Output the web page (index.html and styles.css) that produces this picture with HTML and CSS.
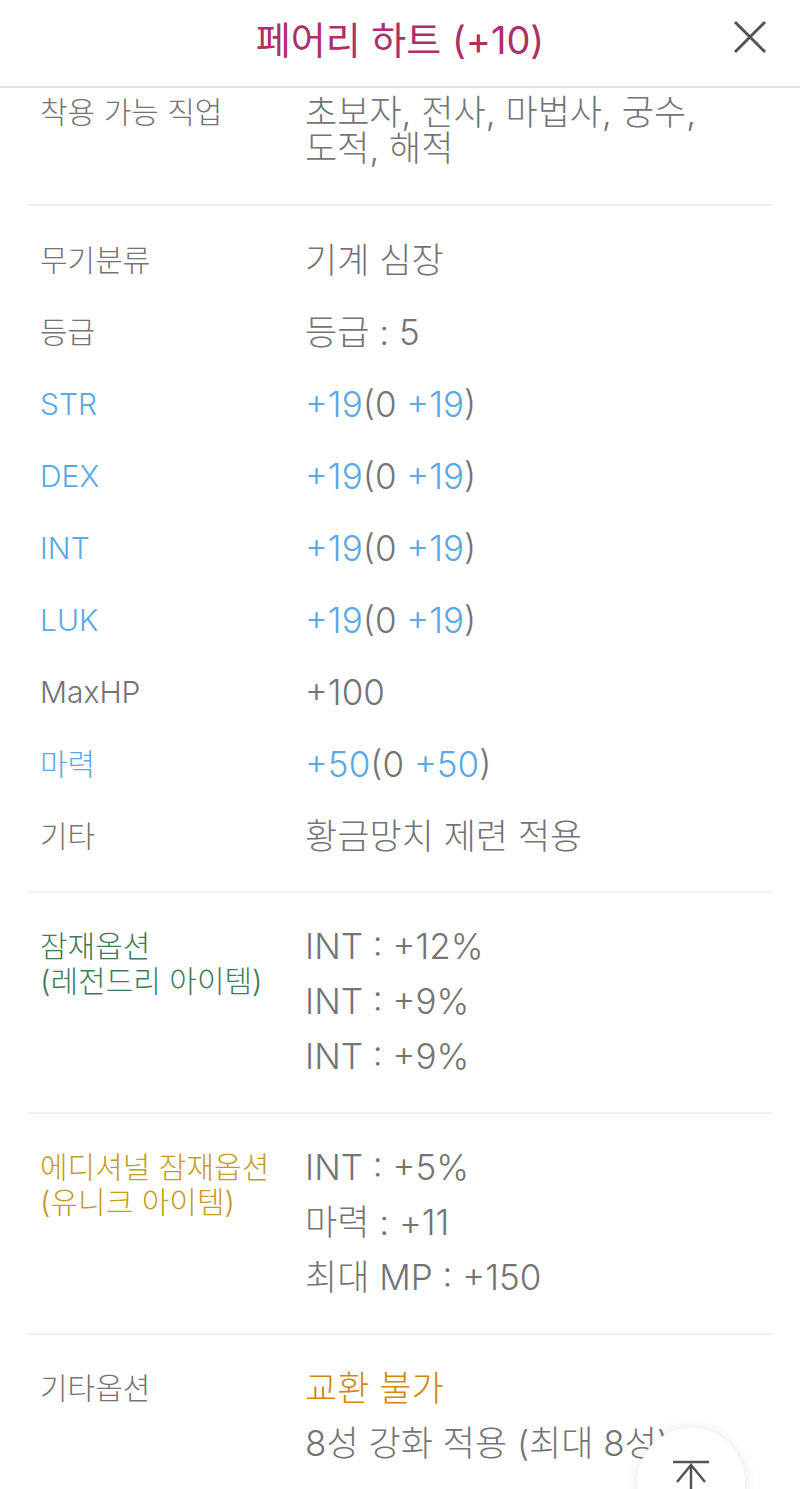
FILE: index.html
```html
<!DOCTYPE html>
<html lang="ko">
<head>
    <meta charset="UTF-8">
    <meta name="viewport" content="width=device-width, initial-scale=1.0">
    <title>페어리 하트 (+10)</title>
    <link rel="stylesheet" href="styles.css">
</head>
<body>
    <header class="header">
        <span></span>
        <h1 class="title">페어리 하트 (+10)</h1>
        <button class="close" aria-label="닫기">
            <svg width="34" height="34" viewBox="0 0 34 34">
                <path d="M2 2 L32 32 M32 2 L2 32" stroke="#555" stroke-width="3" fill="none"/>
            </svg>
        </button>
    </header>

    <div class="content">
        <section class="group first">
            <div class="row">
                <div class="label">착용 가능 직업</div>
                <div class="value">초보자, 전사, 마법사, 궁수,<br>도적, 해적</div>
            </div>
        </section>

        <section class="group stats">
            <div class="row">
                <div class="label">무기분류</div>
                <div class="value">기계 심장</div>
            </div>
            <div class="row">
                <div class="label">등급</div>
                <div class="value">등급 : 5</div>
            </div>
            <div class="row">
                <div class="label blue">STR</div>
                <div class="value"><span class="blue">+19</span>(0 <span class="blue">+19</span>)</div>
            </div>
            <div class="row">
                <div class="label blue">DEX</div>
                <div class="value"><span class="blue">+19</span>(0 <span class="blue">+19</span>)</div>
            </div>
            <div class="row">
                <div class="label blue">INT</div>
                <div class="value"><span class="blue">+19</span>(0 <span class="blue">+19</span>)</div>
            </div>
            <div class="row">
                <div class="label blue">LUK</div>
                <div class="value"><span class="blue">+19</span>(0 <span class="blue">+19</span>)</div>
            </div>
            <div class="row">
                <div class="label">MaxHP</div>
                <div class="value">+100</div>
            </div>
            <div class="row">
                <div class="label blue">마력</div>
                <div class="value"><span class="blue">+50</span>(0 <span class="blue">+50</span>)</div>
            </div>
            <div class="row">
                <div class="label">기타</div>
                <div class="value">황금망치 제련 적용</div>
            </div>
        </section>

        <section class="group options">
            <div class="row">
                <div class="label green">잠재옵션<br>(레전드리 아이템)</div>
                <div class="value">
                    <p>INT : +12%</p>
                    <p>INT : +9%</p>
                    <p>INT : +9%</p>
                </div>
            </div>
        </section>

        <section class="group options">
            <div class="row">
                <div class="label gold">에디셔널 잠재옵션<br>(유니크 아이템)</div>
                <div class="value">
                    <p>INT : +5%</p>
                    <p>마력 : +11</p>
                    <p>최대 MP : +150</p>
                </div>
            </div>
        </section>

        <section class="group options">
            <div class="row">
                <div class="label">기타옵션</div>
                <div class="value">
                    <p class="orange">교환 불가</p>
                    <p>8성 강화 적용 (최대 8성)</p>
                </div>
            </div>
        </section>
    </div>

    <button class="to-top" aria-label="맨 위로">
        <svg width="108" height="108" viewBox="0 0 108 108">
            <path d="M36 34 H72 M54 37 V80 M40 54 L54 37 L68 54" stroke="#555" stroke-width="2.5" fill="none"/>
        </svg>
    </button>
</body>
</html>
```

FILE: styles.css
```css
body {
    margin: 0;
    font-family: Inter, "Noto Sans CJK KR", sans-serif;
    font-weight: 300;
    color: #747474;
    background: #fff;
}
.header {
    display: grid;
    grid-template-columns: 1fr auto 1fr;
    align-items: center;
    height: 74px;
    padding-bottom: 12px;
    border-bottom: 2px solid #e3e3e3;
}
.title {
    margin: 0;
    font-size: 38px;
    font-weight: 400;
    color: #ad3069;
}
.close {
    justify-self: end;
    margin-right: 33px;
    padding: 0;
    border: none;
    background: none;
    width: 34px;
    height: 34px;
}
.content {
    margin: 0 28px;
}
.group {
    border-top: 2px solid #efefef;
}
.group.first {
    border-top: none;
    padding: 6px 0 38px;
}
.row {
    display: grid;
    grid-template-columns: 265px 1fr;
    padding-left: 12px;
}
.label {
    font-size: 30px;
}
.value {
    font-size: 35px;
}
.value p {
    margin: 0;
}
.first .label,
.first .value {
    line-height: 36px;
}
.stats {
    padding: 18px 0 19px;
}
.stats .row {
    line-height: 72px;
}
.options {
    padding: 26px 0 28px;
}
.options .label {
    line-height: 35px;
    padding-top: 10px;
}
.options .value {
    line-height: 55px;
}
.blue {
    color: #5aa9e6;
}
.green {
    color: #3e7c58;
}
.gold {
    color: #c49b22;
}
.orange {
    color: #d2860f;
}
.to-top {
    position: fixed;
    right: 55px;
    bottom: -47px;
    width: 108px;
    height: 108px;
    padding: 0;
    border: none;
    border-radius: 50%;
    background: #fff;
    box-shadow: 0 0 14px rgba(0, 0, 0, 0.1);
}
.to-top svg {
    display: block;
}
```
